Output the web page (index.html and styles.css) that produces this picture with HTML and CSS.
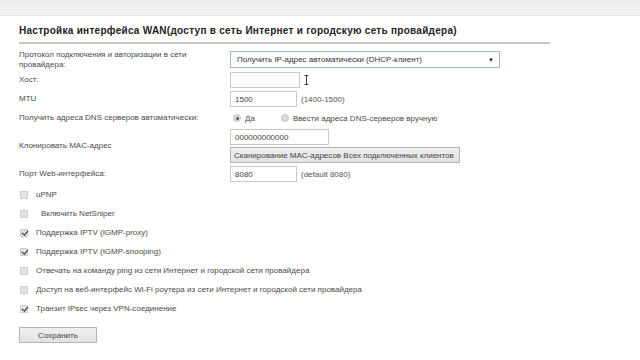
FILE: index.html
```html
<!DOCTYPE html>
<html lang="ru">
<head>
<meta charset="utf-8">
<title>WAN</title>
<link rel="stylesheet" href="styles.css">
</head>
<body>
<div class="topbar"></div>
<main class="content">
  <h1 class="title">Настройка интерфейса WAN(доступ в сеть Интернет и городскую сеть провайдера)</h1>
  <div class="form">
    <div class="label">Протокол подключения и авторизации в сети провайдера:</div>
    <div class="ctrl"><div class="select"><span>Получить IP-адрес автоматически (DHCP-клиент)</span><span class="arrow">▼</span></div></div>

    <div class="label">Хост:</div>
    <div class="ctrl host"><div class="input w70"></div>
      <svg class="cursor" width="5" height="10" viewBox="0 0 5 10"><path d="M0.5 0.5h4M0.5 9.5h4M2.5 0.5v9" stroke="#444" stroke-width="1" fill="none"/></svg>
    </div>

    <div class="label">MTU</div>
    <div class="ctrl"><div class="input w67">1500</div><span class="hint">(1400-1500)</span></div>

    <div class="label">Получить адреса DNS серверов автоматически:</div>
    <div class="ctrl radios">
      <span class="radio checked"></span><span class="rtext">Да</span>
      <span class="radio"></span><span class="rtext">Ввести адреса DNS-серверов вручную</span>
    </div>

    <div class="label">Клонировать MAC-адрес</div>
    <div class="ctrl stack">
      <div class="input w99">000000000000</div>
      <div class="button wide">Сканирование MAC-адресов Всех подключенных клиентов</div>
    </div>

    <div class="label">Порт Web-интерфейса:</div>
    <div class="ctrl"><div class="input w67">8080</div><span class="hint">(default 8080)</span></div>
  </div>

  <ul class="checks">
    <li><span class="cb"></span><span>uPNP</span></li>
    <li><span class="cb"></span><span class="indent">Включить NetSniper</span></li>
    <li><span class="cb checked"></span><span>Поддержка IPTV (IGMP-proxy)</span></li>
    <li><span class="cb checked"></span><span>Поддержка IPTV (IGMP-snooping)</span></li>
    <li><span class="cb"></span><span>Отвечать на команду ping из сети Интернет и городской сети провайдера</span></li>
    <li><span class="cb"></span><span>Доступ на веб-интерфейс Wi-Fi роутера из сети Интернет и городской сети провайдера</span></li>
    <li><span class="cb checked"></span><span>Транзит IPsec через VPN-соединение</span></li>
  </ul>

  <div class="button save">Сохранить</div>
</main>
</body>
</html>
```
FILE: styles.css
```css
* { box-sizing: border-box; }
html, body { margin: 0; padding: 0; background: #fff; }
body {
  width: 640px;
  height: 360px;
  overflow: hidden;
  font-family: "Liberation Sans", Arial, sans-serif;
  font-size: 8px;
  color: #4a4a4a;
}
.topbar {
  height: 16px;
  background: linear-gradient(#ececec, #f3f3f3);
  border-bottom: 1px solid #e6e6e6;
}
.content {
  padding: 0 0 0 19px;
}
.title {
  margin: 9px 0 0 0;
  width: 531px;
  padding-bottom: 5px;
  border-bottom: 2px solid #c4c4c4;
  font-size: 10px;
  font-weight: bold;
  letter-spacing: 0.27px;
  color: #222;
  line-height: 12px;
}
.form {
  margin-top: 6px;
  display: grid;
  grid-template-columns: 211px auto;
  row-gap: 3px;
  align-items: center;
}
.label {
  line-height: 9.5px;
  padding-right: 20px;
}
.ctrl {
  display: flex;
  align-items: center;
  gap: 4px;
}
.host { position: relative; }
.cursor { position: absolute; left: 74px; top: 3px; }
.select {
  width: 270px;
  height: 17px;
  border: 1px solid #9fb8d4;
  display: flex;
  align-items: center;
  justify-content: space-between;
  padding: 0 5px 0 6px;
  color: #333;
  background: #fff;
}
.arrow { font-size: 6px; color: #222; }
.input {
  height: 16px;
  border: 1px solid #c8c8c8;
  display: flex;
  align-items: center;
  padding-left: 4px;
  color: #444;
  background: #fff;
}
.w70 { width: 70px; }
.w67 { width: 67px; }
.w99 { width: 99px; }
.hint { color: #555; }
.radios { height: 16px; gap: 0; }
.radio {
  width: 8px;
  height: 8px;
  border-radius: 50%;
  background: #dcdcdc;
  border: 1px solid #c9c9c9;
  position: relative;
  margin: 0 4px 0 3px;
  flex: none;
}
.radio.checked::after {
  content: "";
  position: absolute;
  left: 1.5px;
  top: 1.5px;
  width: 3px;
  height: 3px;
  border-radius: 50%;
  background: #555;
}
.rtext { margin-right: 23px; }
.stack {
  flex-direction: column;
  align-items: flex-start;
  gap: 2px;
}
.button {
  height: 16px;
  border: 1px solid #b4b4b4;
  background: linear-gradient(#f0f0f0, #e2e2e2);
  display: flex;
  align-items: center;
  color: #444;
  white-space: nowrap;
}
.wide { width: 230px; padding-left: 3px; }
.checks {
  list-style: none;
  margin: 3px 0 0 0;
  padding: 0;
}
.checks li {
  height: 19px;
  display: flex;
  align-items: center;
  gap: 8px;
}
.cb {
  width: 8px;
  height: 8px;
  margin-left: 1px;
  background: #e2e2e2;
  border: 1px solid #cacaca;
  border-radius: 1px;
  position: relative;
  flex: none;
}
.cb.checked::after {
  content: "";
  position: absolute;
  left: 1.5px;
  top: -0.5px;
  width: 2.5px;
  height: 5px;
  border-right: 1.5px solid #333;
  border-bottom: 1.5px solid #333;
  transform: rotate(40deg);
}
.indent { padding-left: 5px; }
.save {
  margin-top: 9px;
  width: 78px;
  justify-content: center;
}
```
